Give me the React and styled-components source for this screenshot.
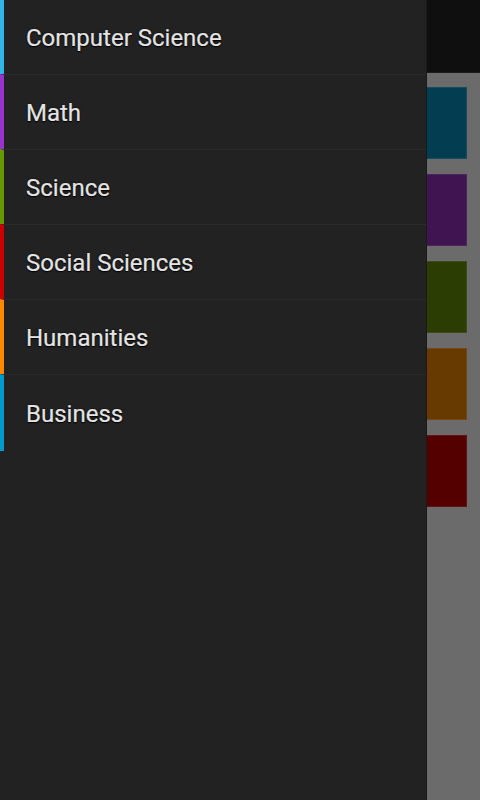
import React from "react";
import styled, { createGlobalStyle } from "styled-components";

const Global = createGlobalStyle`
  html, body { margin: 0; padding: 0; background: #6b6b6b; }
  body { width: 480px; height: 800px; overflow: hidden; font-family: Roboto, "Noto Sans", sans-serif; }
`;

const Screen = styled.div`
  display: flex;
  width: 480px;
  height: 800px;
`;

const Drawer = styled.nav`
  width: 426px;
  flex: none;
  background: #222222;
  display: flex;
  flex-direction: column;
  box-shadow: 1px 0 0 #1a1a1a;
  position: relative;
  z-index: 1;
`;

const Item = styled.div`
  height: 74px;
  box-sizing: border-box;
  display: flex;
  align-items: center;
  border-left: 4px solid ${(p) => p.$accent};
  padding: 2px 0 0 22px;
  font-size: 24px;
  color: #e4e4e4;
  text-shadow: 0 0 2px #000, 0 1px 1px #000;
  -webkit-text-stroke: 0.2px #e4e4e4;
  & + & {
    border-top: 1px solid #2a2a2a;
    height: 75px;
  }
  &:last-child {
    height: 77px;
  }
`;

const Side = styled.div`
  flex: 1;
  display: flex;
  flex-direction: column;
  background: #6b6b6b;
`;

const ActionBar = styled.div`
  height: 72px;
  background: #0f0f0f;
  border-bottom: 1px solid #1c1c1c;
`;

const Cards = styled.div`
  display: flex;
  flex-direction: column;
  gap: 15px;
  padding: 14px 13px 0 1px;
`;

const Card = styled.div`
  height: 70px;
  background: ${(p) => p.$bg};
  border: 1px solid rgba(255,255,255,0.08);
  border-left: none;
`;

const items = [
  ["Computer Science", "#33b5e5"],
  ["Math", "#9933cc"],
  ["Science", "#669900"],
  ["Social Sciences", "#cc0000"],
  ["Humanities", "#ff8800"],
  ["Business", "#0099cc"],
];

const cards = ["#033d52", "#3f1451", "#2b3d03", "#663a00", "#550000"];

export default function App() {
  return (
    <>
      <Global />
      <Screen>
        <Drawer>
          {items.map(([label, c]) => (
            <Item key={label} $accent={c}>{label}</Item>
          ))}
        </Drawer>
        <Side>
          <ActionBar />
          <Cards>
            {cards.map((c) => (
              <Card key={c} $bg={c} />
            ))}
          </Cards>
        </Side>
      </Screen>
    </>
  );
}
